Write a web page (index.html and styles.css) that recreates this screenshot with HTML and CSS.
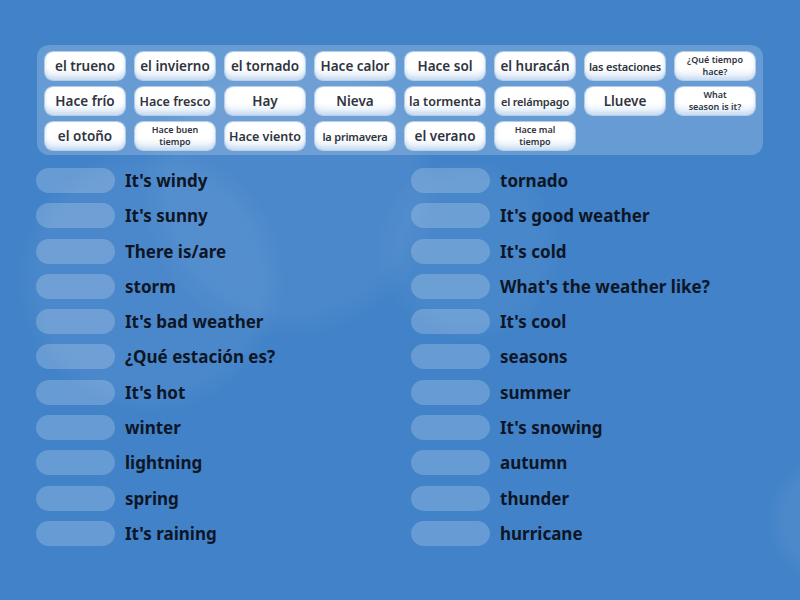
FILE: index.html
```html
<!DOCTYPE html>
<html lang="en">
<head>
  <meta charset="UTF-8" />
  <meta name="viewport" content="width=device-width, initial-scale=1.0" />
  <title>Weather - Match up</title>
  <link rel="stylesheet" href="styles.css">
</head>
<body>
  <div class="game">
    <div class="bank">
      <div class="tile">el trueno</div>
      <div class="tile">el invierno</div>
      <div class="tile">el tornado</div>
      <div class="tile">Hace calor</div>
      <div class="tile">Hace sol</div>
      <div class="tile">el huracán</div>
      <div class="tile xs">las estaciones</div>
      <div class="tile two">¿Qué tiempo<br>hace?</div>

      <div class="tile">Hace frío</div>
      <div class="tile sm">Hace fresco</div>
      <div class="tile">Hay</div>
      <div class="tile">Nieva</div>
      <div class="tile sm">la tormenta</div>
      <div class="tile xs">el relámpago</div>
      <div class="tile">Llueve</div>
      <div class="tile two">What<br>season is it?</div>

      <div class="tile">el otoño</div>
      <div class="tile two">Hace buen<br>tiempo</div>
      <div class="tile sm">Hace viento</div>
      <div class="tile xs">la primavera</div>
      <div class="tile">el verano</div>
      <div class="tile two">Hace mal<br>tiempo</div>
    </div>

    <div class="targets">
      <div class="row"><span class="slot"></span>It's windy</div>
      <div class="row"><span class="slot"></span>tornado</div>
      <div class="row"><span class="slot"></span>It's sunny</div>
      <div class="row"><span class="slot"></span>It's good weather</div>
      <div class="row"><span class="slot"></span>There is/are</div>
      <div class="row"><span class="slot"></span>It's cold</div>
      <div class="row"><span class="slot"></span>storm</div>
      <div class="row"><span class="slot"></span>What's the weather like?</div>
      <div class="row"><span class="slot"></span>It's bad weather</div>
      <div class="row"><span class="slot"></span>It's cool</div>
      <div class="row"><span class="slot"></span>¿Qué estación es?</div>
      <div class="row"><span class="slot"></span>seasons</div>
      <div class="row"><span class="slot"></span>It's hot</div>
      <div class="row"><span class="slot"></span>summer</div>
      <div class="row"><span class="slot"></span>winter</div>
      <div class="row"><span class="slot"></span>It's snowing</div>
      <div class="row"><span class="slot"></span>lightning</div>
      <div class="row"><span class="slot"></span>autumn</div>
      <div class="row"><span class="slot"></span>spring</div>
      <div class="row"><span class="slot"></span>thunder</div>
      <div class="row"><span class="slot"></span>It's raining</div>
      <div class="row"><span class="slot"></span>hurricane</div>
    </div>
  </div>
</body>
</html>
```

FILE: styles.css
```css
body {
  margin: 0;
  height: 600px;
  overflow: hidden;
  font-family: "Noto Sans", sans-serif;
  background-color: #4182c8;
  background-image:
    radial-gradient(circle at 150px 280px, rgba(255, 255, 255, 0.05) 0 110px, transparent 135px),
    radial-gradient(circle at 290px 190px, rgba(255, 255, 255, 0.05) 0 120px, transparent 150px),
    radial-gradient(circle at 470px 250px, rgba(255, 255, 255, 0.04) 0 70px, transparent 95px),
    radial-gradient(circle at 830px 520px, rgba(255, 255, 255, 0.06) 0 45px, transparent 65px);
}

.game {
  padding: 45px 37px 0 36px;
}

.bank {
  display: grid;
  grid-template-columns: repeat(8, 80px);
  grid-auto-rows: 28px;
  column-gap: 10px;
  row-gap: 7px;
  width: 710px;
  padding: 7px 8px 5px;
  margin-left: 1px;
  background-color: rgba(255, 255, 255, 0.2);
  border-radius: 12px;
}

.tile {
  display: flex;
  align-items: center;
  justify-content: center;
  text-align: center;
  background: linear-gradient(#ffffff 55%, #e4eef9);
  border-radius: 8px;
  box-shadow: 0 0 0 1px rgba(255, 255, 255, 0.5), inset 0 -3px 4px rgba(160, 195, 230, 0.45);
  color: #2f3440;
  font-weight: 600;
  font-size: 13.5px;
  white-space: nowrap;
}

.tile.sm {
  font-size: 12.5px;
}

.tile.xs {
  font-size: 11px;
  letter-spacing: -0.2px;
}

.tile.two {
  font-size: 9px;
  line-height: 12px;
}

.targets {
  display: grid;
  grid-template-columns: 375px 375px;
  grid-auto-rows: 25px;
  row-gap: 10.3px;
  margin-top: 13px;
}

.row {
  display: flex;
  align-items: center;
  gap: 10px;
  font-size: 17px;
  font-weight: 700;
  color: #0e1626;
}

.slot {
  width: 79px;
  height: 25px;
  border-radius: 13px;
  background-color: rgba(255, 255, 255, 0.2);
}
```
